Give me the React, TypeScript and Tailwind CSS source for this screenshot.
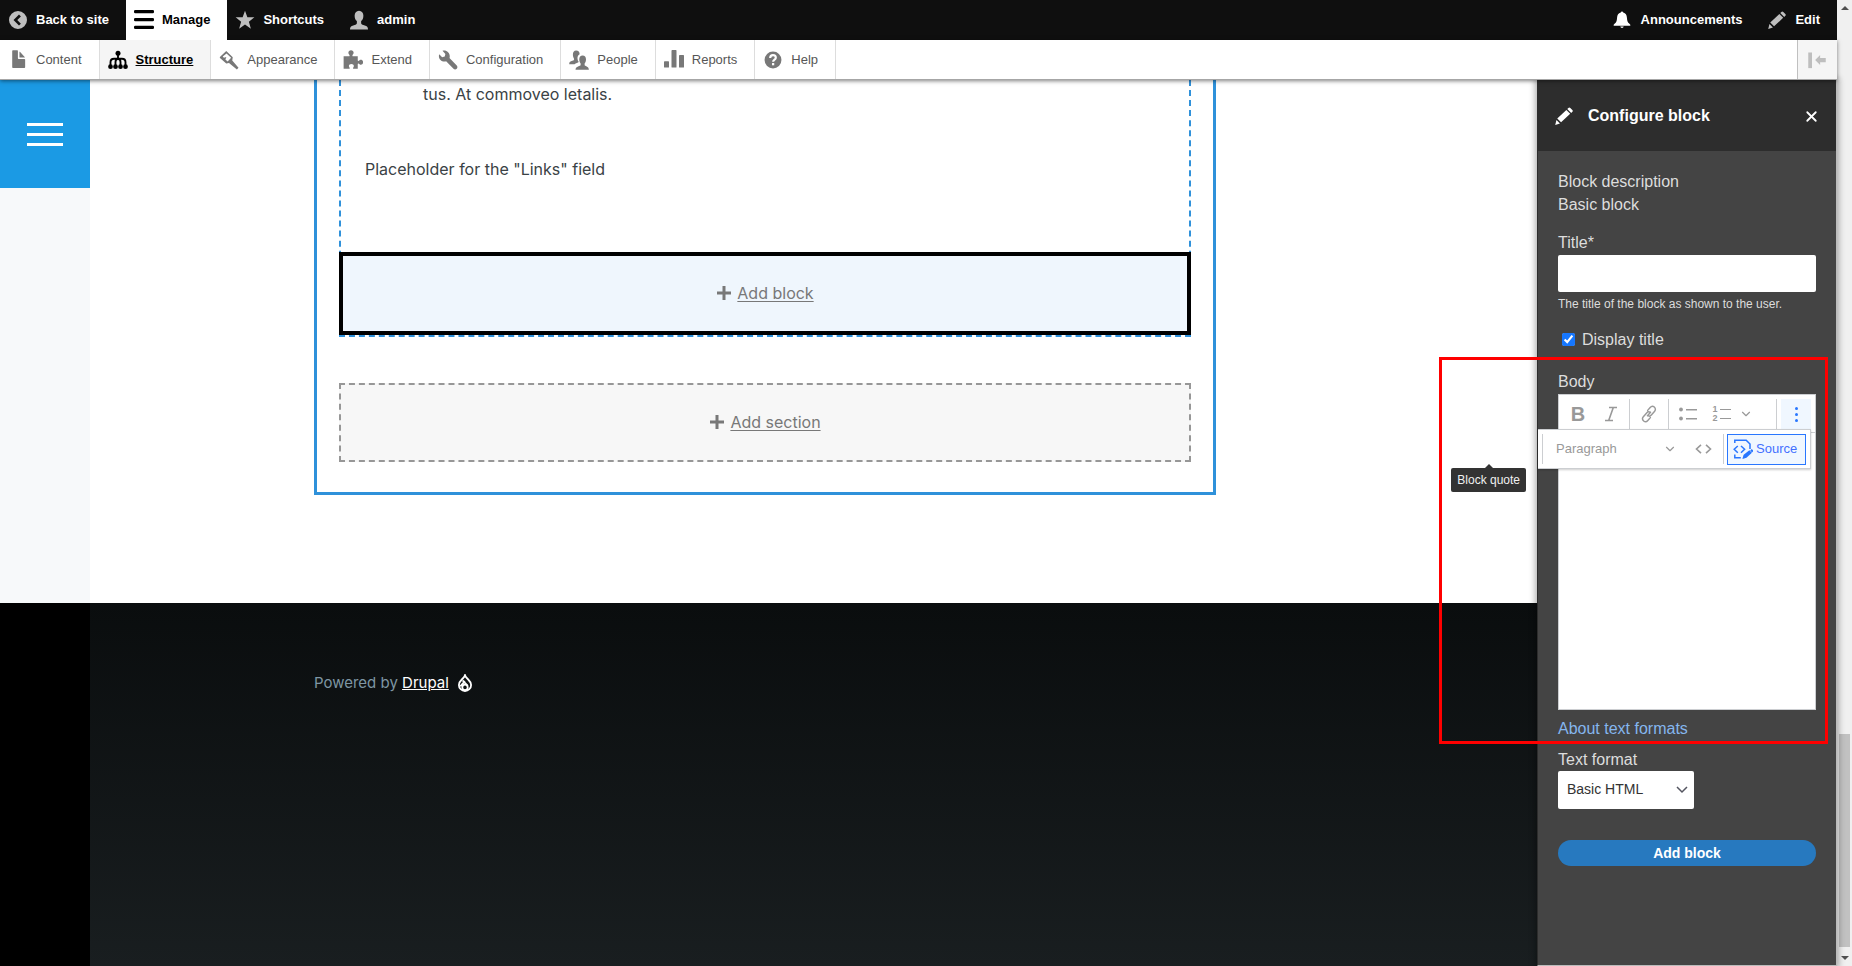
import { useState } from "react";
import type { ReactNode } from "react";
import clsx from "clsx";
import { ChevronDown, X } from "lucide-react";

interface ToolbarItem {
  label: string;
  icon: ReactNode;
  active?: boolean;
}

function Icon({ children, size = 20 }: { children: ReactNode; size?: number }) {
  return (
    <svg
      viewBox="0 0 16 16"
      width={size}
      height={size}
      fill="currentColor"
      aria-hidden="true"
      className="shrink-0"
    >
      {children}
    </svg>
  );
}

const BackIcon = () => (
  <Icon>
    <path
      fillRule="evenodd"
      d="M8 .8a7.2 7.2 0 1 0 0 14.4A7.2 7.2 0 0 0 8 .8zM8.8 3.6l1.5 1.5L7.4 8l2.9 2.9-1.5 1.5L4.400 8z"
    />
  </Icon>
);

const MenuIcon = () => (
  <Icon>
    <rect x="0" y="0" width="16" height="2.600" rx="1" />
    <rect x="0" y="6.300" width="16" height="2.600" rx="1" />
    <rect x="0" y="12.600" width="16" height="2.600" rx="1" />
  </Icon>
);

const StarIcon = () => (
  <Icon>
    <path d="M8 .5l1.900 5.300h5.600l-4.400 3.500 1.600 5.600L8 11.600l-4.700 3.300 1.600-5.600L.5 5.800h5.600z" />
  </Icon>
);

const PersonIcon = () => (
  <Icon>
    <path d="M8 .5c2.200 0 3.500 1.700 3.500 4 0 1.800-.7 3.500-1.800 4.300v1.600c0 .8.700 1.300 1.800 1.600l2.200.8c1 .4 1.500 1.200 1.500 2.700H.8c0-1.500.5-2.300 1.500-2.700l2.200-.8c1.100-.3 1.800-.8 1.800-1.600V8.800C5.200 8 4.500 6.300 4.500 4.500c0-2.300 1.300-4 3.500-4z" />
  </Icon>
);

const BellIcon = () => (
  <Icon size={18}>
    <path d="M8 .5c.6 0 1 .3 1.100.9 2.200.5 3.100 2.300 3.300 4.600.2 3 .6 4.300 2.200 5.400.7.5.8.9.8 1.600H.6c0-.7.100-1.100.8-1.600C3 10.300 3.400 9 3.600 6c.2-2.300 1.100-4.100 3.300-4.600C7 .8 7.400.5 8 .5zM6.500 13.700h3c-.1.800-.7 1.300-1.500 1.300s-1.400-.5-1.500-1.300z" />
  </Icon>
);

const PencilIcon = ({ size = 20 }: { size?: number }) => (
  <Icon size={size}>
    <path d="M15.400 2.600L13.600.8a1.200 1.200 0 0 0-1.700 0l-1 1 3.500 3.500 1-1a1.200 1.200 0 0 0 0-1.700zM10.100 2.700l3.400 3.400-8.100 7.500L2 10.200zM1.300 11.600l3.100 3.100L.2 15.900z" />
  </Icon>
);

const FileIcon = () => (
  <Icon size={19}>
    <path d="M13 7.500H8.100a.6.6 0 0 1-.6-.6V.700a.6.6 0 0 0-.5-.5H3.300a.6.6 0 0 0-.6.6v13.800c0 .3.300.5.600.5h9.700c.3 0 .6-.2.600-.5V8a.6.6 0 0 0-.6-.5zM8.800 6.300h4.300c.3 0 .4-.2.100-.4L9.200 1.500c-.2-.2-.4-.1-.4.200z" />
  </Icon>
);

const StructureIcon = () => (
  <Icon>
    <circle cx="8" cy="2.500" r="2" />
    <circle cx="2" cy="13.300" r="1.900" />
    <circle cx="6" cy="13.300" r="1.900" />
    <circle cx="10" cy="13.300" r="1.900" />
    <circle cx="14" cy="13.300" r="1.900" />
    <path
      fill="none"
      stroke="currentColor"
      strokeWidth="1.500"
      d="M8 3v4M2 13v-3.200c0-1.800 1-2.800 2.800-2.800h6.400c1.800 0 2.800 1 2.800 2.800V13M6 13V9.500C6 8 6.600 7.200 8 7c1.400.2 2 1 2 2.500V13"
    />
  </Icon>
);

const AppearanceIcon = () => (
  <Icon>
    <path
      fillRule="evenodd"
      d="M5.800.7L.9 5.400c-.4.4-.3.900.1 1.200l4.800 4.100 2.200-.4 6.300 5.300 1.300-1.500-5-5.800.4-2.600zM6 2.700l3.700 3.500-2.800 2.900-1.800-1.600.8-2-2 .6-.9-.900z"
    />
  </Icon>
);

const PuzzleIcon = () => (
  <Icon>
    <path d="M.5 5h4.200c.6 0 .7-.4.5-.9C4.900 3.500 4.300 3 4.300 2.200 4.300 1 5.200.2 6.400.2s2.100.8 2.100 2c0 .8-.6 1.300-.9 1.900-.2.500-.1.900.500.9h3.700v3.200c0 .6.400.7.900.400.500-.4.900-.8 1.600-.8 1.100 0 1.800.9 1.800 2s-.7 2-1.800 2c-.7 0-1.100-.5-1.600-.800-.5-.3-.9-.1-.9.400V15H8.600c-.6 0-.7-.3-.5-.8.200-.4.600-.8.600-1.400 0-1-.9-1.600-2-1.600s-2 .6-2 1.600c0 .6.400 1 .6 1.400.2.500.1.800-.5.800H.5z" />
  </Icon>
);

const WrenchIcon = () => (
  <Icon>
    <path d="M15 12.300L9.200 6.400c.2-.5.2-.9.200-1.400C9.400 2.400 7.300.4 4.900.4c-.5 0-.8.1-1.300.2l2.300 2.500-.5 2.100-2.100.6L1 3.300c-.2.500-.300.9-.3 1.400 0 2.500 2 4.500 4.500 4.500.4 0 .9-.1 1.300-.2l5.900 6c.7.7 1.900.7 2.600 0s.7-1.900 0-2.700z" />
  </Icon>
);

const PeopleIcon = () => (
  <Icon>
    <path d="M5.700.3c1.800 0 2.900 1.300 2.800 3.100-1.200.7-1.900 2-1.700 3.600.1 1 .4 1.900 1 2.600-.5.700-2.400.8-3.400 1.700H.2c0-1.400.3-2 1.400-2.400 1.600-.5 2.500-.6 2.500-1.600 0-.7-.9-1.500-1-3.400C3 1.600 4 .3 5.700.3z" />
    <path d="M10.900 4.400c1.700 0 2.700 1.300 2.700 3.200 0 1.600-.6 2.500-1.100 3.100v1.200c0 1 3.300.8 3.400 3.800H5.200c.1-3 4.100-2.800 4.100-3.800v-1.200c-.5-.6-1.100-1.500-1.100-3.100 0-1.900 1-3.200 2.700-3.200z" />
  </Icon>
);

const ReportsIcon = () => (
  <Icon>
    <rect x="0" y="9" width="4" height="5" rx=".5" />
    <rect x="6" y="0" width="4" height="14" rx=".5" />
    <rect x="12" y="4" width="4" height="10" rx=".5" />
  </Icon>
);

const HelpIcon = () => (
  <Icon size={18}>
    <circle cx="8" cy="8" r="7.500" />
    <path
      d="M5.500 6.200C5.500 4.600 6.500 3.700 8 3.700s2.500.9 2.500 2.200c0 1.700-2.400 1.700-2.400 3.600"
      fill="none"
      stroke="#fff"
      strokeWidth="1.900"
    />
    <rect x="7.100" y="10.700" width="2" height="2" fill="#fff" />
  </Icon>
);

const PlusIcon = () => (
  <Icon size={16}>
    <path d="M6.500 1h3v5.500H15v3H9.500V15h-3V9.500H1v-3h5.500z" />
  </Icon>
);

const DrupalIcon = () => (
  <svg
    viewBox="0 0 14 18"
    className="h-[18px] w-[14px]"
    fill="none"
    stroke="#fff"
    strokeWidth="1.800"
    aria-hidden="true"
  >
    <path d="M7 1.200c.5 1.800 1.800 2.900 3.200 4.300 1.500 1.500 2.900 3 2.900 5.400a6.100 6.100 0 0 1-12.200 0c0-2.400 1.400-3.900 2.900-5.400C5.200 4.100 6.500 3 7 1.200z" />
    <path d="M2.300 12.300l4.600-5.200M4.600 6.400l5.200 5.400" />
    <circle cx="7" cy="13.400" r="2.700" />
  </svg>
);

const leftItems: ToolbarItem[] = [
  { label: "Back to site", icon: <BackIcon /> },
  { label: "Manage", icon: <MenuIcon />, active: true },
  { label: "Shortcuts", icon: <StarIcon /> },
  { label: "admin", icon: <PersonIcon /> },
];

const trayItems: ToolbarItem[] = [
  { label: "Content", icon: <FileIcon /> },
  { label: "Structure", icon: <StructureIcon />, active: true },
  { label: "Appearance", icon: <AppearanceIcon /> },
  { label: "Extend", icon: <PuzzleIcon /> },
  { label: "Configuration", icon: <WrenchIcon /> },
  { label: "People", icon: <PeopleIcon /> },
  { label: "Reports", icon: <ReportsIcon /> },
  { label: "Help", icon: <HelpIcon /> },
];

function BarLink({ item }: { item: ToolbarItem }) {
  const isAnnouncements = item.label === "Announcements";

  return (
    <a
      href="#"
      className={clsx(
        "flex items-center gap-2 pr-[17px] pl-2 font-bold",
        item.active ? "bg-white text-black" : "text-white",
      )}
    >
      <span
        className={clsx(
          "flex w-5",
          isAnnouncements ? "justify-start" : "justify-center",
          !item.active && !isAnnouncements && "text-[#bebebe]",
        )}
      >
        {item.icon}
      </span>
      {item.label}
    </a>
  );
}

function AdminToolbar() {
  return (
    <header className="relative z-20 text-[13px] leading-4">
      <nav
        aria-label="Toolbar"
        className="flex h-10 justify-between bg-[#0f0f0f]"
      >
        <div className="flex">
          {leftItems.map((item) => (
            <BarLink key={item.label} item={item} />
          ))}
        </div>
        <div className="flex">
          <BarLink item={{ label: "Announcements", icon: <BellIcon /> }} />
          <BarLink item={{ label: "Edit", icon: <PencilIcon size={18} /> }} />
        </div>
      </nav>
      <nav
        aria-label="Administration menu"
        className="flex h-10 justify-between border-b border-[#a6a6a6] bg-white shadow-[0_1px_4px_rgba(0,0,0,0.5)]"
      >
        <ul className="flex">
          {trayItems.map((item) => (
            <li key={item.label} className="flex">
              <a
                href="#"
                className={clsx(
                  "flex items-center gap-2 border-r border-[#ddd] pr-[17px] pl-2",
                  item.active
                    ? "bg-[#f5f5f5] font-bold text-black underline"
                    : "text-[#565656]",
                )}
              >
                <span
                  className={clsx(
                    "flex w-5 justify-center",
                    !item.active && "text-[#787878]",
                  )}
                >
                  {item.icon}
                </span>
                {item.label}
              </a>
            </li>
          ))}
        </ul>
        <button
          type="button"
          aria-label="Vertical orientation"
          className="flex w-10 items-center border-l border-[#c0c0c0] bg-[#f5f5f5] pl-[9px] text-[#bebebe]"
        >
          <Icon>
            <rect x="1" y="2" width="3" height="12.500" />
            <path d="M6.500 8l4-4v2.300H15v3.400h-4.500V12z" />
          </Icon>
        </button>
      </nav>
    </header>
  );
}

function LayoutCanvas() {
  return (
    <main className="flex-1 bg-white pr-[321px] pb-[108px] pl-[224px] font-['Inter',sans-serif] text-base">
      <div className="border-x-[3px] border-b-[3px] border-[#2f91da] px-[22px] pb-[30px]">
        <div className="border-x-2 border-b-2 border-dashed border-[#2f91da] text-[#3a4245]">
          <p className="pt-[2px] pl-[82px] leading-6">
            tus. At commoveo letalis.
          </p>
          <p className="pt-[51px] pb-[71px] pl-6 leading-6">
            Placeholder for the "Links" field
          </p>
          <div className="-mx-[2px] flex h-[83px] items-center justify-center gap-[5px] border-4 border-black bg-[#eff6fd] pb-[2px] text-[#787878]">
            <PlusIcon />
            <a href="#" className="underline underline-offset-2">
              Add block
            </a>
          </div>
        </div>
        <div className="mt-[46px] flex h-[79px] items-center justify-center gap-[5px] border-2 border-dashed border-[#979797] bg-[#f7f7f7] pb-[2px] text-[#787878]">
          <PlusIcon />
          <a href="#" className="underline underline-offset-2">
            Add section
          </a>
        </div>
      </div>
    </main>
  );
}

function EditorToolbar() {
  return (
    <div className="relative flex h-[38px] items-start border-b border-[#ccced1] pt-1 pr-1 text-[#999]">
      <button
        type="button"
        aria-label="Bold"
        className="ml-1 h-[30px] w-[30px] text-xl leading-[30px] font-bold"
      >
        B
      </button>
      <button
        type="button"
        aria-label="Italic"
        className="flex h-[30px] w-9 items-center justify-center"
      >
        <svg width="14" height="16" fill="none" stroke="currentColor">
          <path
            d="M5 1.500h8M1 14.500h8M9.300 1.500L4.700 14.500"
            strokeWidth="1.600"
          />
        </svg>
      </button>
      <span className="h-[30px] w-px bg-[#ccced1]" />
      <button
        type="button"
        aria-label="Link"
        className="flex h-[30px] w-[38px] items-center justify-center"
      >
        <svg
          width="18"
          height="18"
          viewBox="0 0 20 20"
          fill="none"
          stroke="currentColor"
          strokeWidth="1.600"
          strokeLinecap="round"
        >
          <path d="M8.500 6l2.800-3.200c1.300-1.500 3.300-1.600 4.600-.5 1.400 1.200 1.600 3.200.4 4.600l-3.700 4.300c-1 1.200-2.900 1.400-4.200.5M11.500 14l-2.800 3.200c-1.300 1.500-3.300 1.600-4.600.5-1.400-1.200-1.600-3.200-.4-4.600l3.700-4.300c1-1.200 2.500-1.500 3.800-.8M8.300 12l3.400-4" />
        </svg>
      </button>
      <span className="h-[30px] w-px bg-[#ccced1]" />
      <button
        type="button"
        aria-label="Bulleted List"
        className="flex h-[30px] w-[37px] items-center justify-center"
      >
        <svg width="18" height="14" fill="currentColor">
          <circle cx="2" cy="2.500" r="1.900" />
          <circle cx="2" cy="11.500" r="1.900" />
          <rect x="7" y="2" width="11" height="1.500" />
          <rect x="7" y="11" width="11" height="1.500" />
        </svg>
      </button>
      <button
        type="button"
        aria-label="Numbered List"
        className="flex h-[30px] w-[31px] items-center justify-center gap-[2px]"
      >
        <span className="text-[9px] leading-[9px] font-bold">
          1<br />2
        </span>
        <span className="flex w-[11px] flex-col gap-2">
          <span className="h-px bg-[#999]" />
          <span className="h-px bg-[#999]" />
        </span>
      </button>
      <button
        type="button"
        aria-label="List options"
        className="flex h-[30px] w-[18px] items-center justify-center"
      >
        <ChevronDown size={14} />
      </button>
      <span className="ml-auto h-[30px] w-px bg-[#ccced1]" />
      <button
        type="button"
        aria-label="Show more items"
        className="ml-1 flex h-[30px] w-[30px] flex-col items-center justify-center gap-[3px] bg-[#f0f7ff]"
      >
        <span className="h-[3px] w-[3px] rounded-full bg-[#2977ff]" />
        <span className="h-[3px] w-[3px] rounded-full bg-[#2977ff]" />
        <span className="h-[3px] w-[3px] rounded-full bg-[#2977ff]" />
      </button>

      {/* Overflow items drop below the toolbar, aligned to its right edge */}
      <div className="absolute top-[34px] right-1 z-10 flex h-10 w-[273px] items-center border border-l-0 border-[#ccced1] bg-white pr-1 text-[13px] shadow-[0_1px_2px_rgba(0,0,0,0.2)]">
        <span className="ml-1 h-[30px] w-px bg-[#ccced1]" />
        <button
          type="button"
          className="flex flex-1 items-center justify-between pr-[6px] pl-[13px]"
        >
          Paragraph
          <ChevronDown size={14} />
        </button>
        <button
          type="button"
          aria-label="Code"
          className="flex w-10 items-center justify-center"
        >
          <svg
            width="17"
            height="10"
            fill="none"
            stroke="currentColor"
            strokeWidth="1.600"
          >
            <path d="M6 .8L1.500 5 6 9.200M11 .8L15.500 5 11 9.200" />
          </svg>
        </button>
        <span className="h-[30px] w-px bg-[#ccced1]" />
        <button
          type="button"
          className="ml-[3px] flex h-[31px] w-[79px] items-center gap-[3px] border border-[#2977ff] bg-[#f0f7ff] pl-[5px] text-[#4370ff]"
        >
          <svg
            width="20"
            height="20"
            fill="none"
            stroke="#2977ff"
            strokeWidth="1.500"
            className="shrink-0"
          >
            <path d="M1.800 4V1.200h11.400L17 5v5M1.800 15.500v3.300h6M4.800 7L1.200 10.300l3.600 3.400M8 7l3.600 3.300L8 13.700" />
            <path
              d="M10.500 18.800l.8-2.500 5-4 1.500 1.500-4.700 4.200z"
              fill="#2977ff"
            />
            <path d="M18 10.800l1.800 1.800" strokeWidth="2.200" />
          </svg>
          Source
        </button>
      </div>

      <span
        role="tooltip"
        className="absolute top-[73px] right-[289px] flex h-6 items-center rounded-xs bg-[#333] px-[6px] text-xs whitespace-nowrap text-[#f0f0f0]"
      >
        <span className="absolute -top-1 left-1/2 h-0 w-0 -translate-x-1/2 border-x-4 border-b-4 border-x-transparent border-b-[#333]" />
        Block quote
      </span>
    </div>
  );
}

function ConfigureDialog() {
  const [title, setTitle] = useState("");
  const [displayTitle, setDisplayTitle] = useState(true);
  const [body, setBody] = useState("");

  return (
    <aside className="relative z-10 flex w-[300px] shrink-0 flex-col border-x border-b border-r-[#bbb] border-b-[#bbb] border-l-[#2d2d2d] bg-[#444] text-base text-[#ddd] shadow-[0_0_6px_2px_rgba(0,0,0,0.3)]">
      <div className="flex h-[71px] items-center bg-[#2d2d2d] pr-4 pl-[17px] text-white">
        <PencilIcon size={18} />
        <h2 className="ml-[15px] flex-1 font-bold">Configure block</h2>
        <button type="button" aria-label="Close" className="pt-[2px]">
          <X size={17} strokeWidth={2.5} />
        </button>
      </div>
      <form
        className="flex flex-col px-5 pt-[19px] leading-[23px]"
        onSubmit={(e) => e.preventDefault()}
      >
        <p>Block description</p>
        <p>Basic block</p>
        <label htmlFor="title" className="mt-[15px]">
          Title*
        </label>
        <input
          id="title"
          type="text"
          value={title}
          onChange={(e) => setTitle(e.target.value)}
          className="mt-px h-[37px] rounded-xs bg-white px-2 text-sm text-[#333]"
        />
        <p className="mt-1 text-xs leading-4">
          The title of the block as shown to the user.
        </p>
        <div className="mt-4 flex items-center gap-[7px] pl-1">
          <input
            id="display-title"
            type="checkbox"
            checked={displayTitle}
            onChange={(e) => setDisplayTitle(e.target.checked)}
            className="h-[13px] w-[13px] accent-[#1677ff]"
          />
          <label htmlFor="display-title">Display title</label>
        </div>
        <label htmlFor="body" className="mt-[19px]">
          Body
        </label>
        <div className="mt-px border border-[#ccced1] bg-white leading-4">
          <EditorToolbar />
          <textarea
            id="body"
            value={body}
            onChange={(e) => setBody(e.target.value)}
            className="block h-[276px] w-full resize-none p-2 text-sm text-[#333] outline-none"
          />
        </div>
        <a href="#" className="mt-[7px] text-[#85b6ee]">
          About text formats
        </a>
        <label htmlFor="format" className="mt-2">
          Text format
        </label>
        <div className="relative w-[136px]">
          <select
            id="format"
            className="block h-[38px] w-full appearance-none rounded-xs bg-white pb-[2px] pl-[9px] text-sm text-[#333]"
          >
            <option>Basic HTML</option>
          </select>
          <svg
            width="12"
            height="8"
            fill="none"
            stroke="#545560"
            strokeWidth="1.500"
            className="pointer-events-none absolute top-[15px] right-[6px]"
          >
            <path d="M1 1l5 5 5-5" />
          </svg>
        </div>
        <button
          type="submit"
          className="mt-[31px] h-[26px] rounded-full bg-[#2779bf] text-sm font-bold text-white"
        >
          Add block
        </button>
      </form>
      {/* Highlight around the body field */}
      <div className="pointer-events-none absolute top-[277px] right-[8px] z-20 h-[387px] w-[389px] border-[3px] border-[#f00]" />
    </aside>
  );
}

function ScrollBar() {
  return (
    <div
      aria-hidden="true"
      className="flex w-[15px] shrink-0 flex-col items-center bg-[#f0f0f0] py-[6px]"
    >
      <span className="border-x-4 border-b-4 border-x-transparent border-b-[#505050]" />
      <span className="mt-auto mb-[9px] h-[213px] w-[11px] bg-[#c1c1c1]" />
      <span className="border-x-4 border-t-4 border-x-transparent border-t-[#505050]" />
    </div>
  );
}

export default function App() {
  return (
    <div className="flex min-h-screen font-['Liberation_Sans',Arial,sans-serif]">
      <div className="flex min-w-0 flex-1 flex-col">
        <AdminToolbar />
        <div className="flex flex-1">
          <div className="flex min-w-0 flex-1 flex-col">
            <div className="flex">
              <div className="w-[90px] shrink-0 bg-[#f7f9fa]">
                <button
                  type="button"
                  aria-label="Main menu"
                  className="flex h-[108px] w-full flex-col items-center justify-center gap-[7px] bg-[#1b9ae4]"
                >
                  <span className="h-[3px] w-9 bg-white" />
                  <span className="h-[3px] w-9 bg-white" />
                  <span className="h-[3px] w-9 bg-white" />
                </button>
              </div>
              <LayoutCanvas />
            </div>
            <footer className="flex flex-1 bg-black pl-[90px]">
              <div className="flex-1 bg-linear-to-b from-[#0a0d0e] to-[#191e20] pt-[68px] pl-[224px] font-['Inter',sans-serif] text-[15px] text-[#7e96a3]">
                <p className="flex items-center leading-6">
                  Powered by&nbsp;
                  <a href="#" className="mr-[9px] text-white underline">
                    Drupal
                  </a>
                  <DrupalIcon />
                </p>
              </div>
            </footer>
          </div>
          <ConfigureDialog />
        </div>
      </div>
      <ScrollBar />
    </div>
  );
}
